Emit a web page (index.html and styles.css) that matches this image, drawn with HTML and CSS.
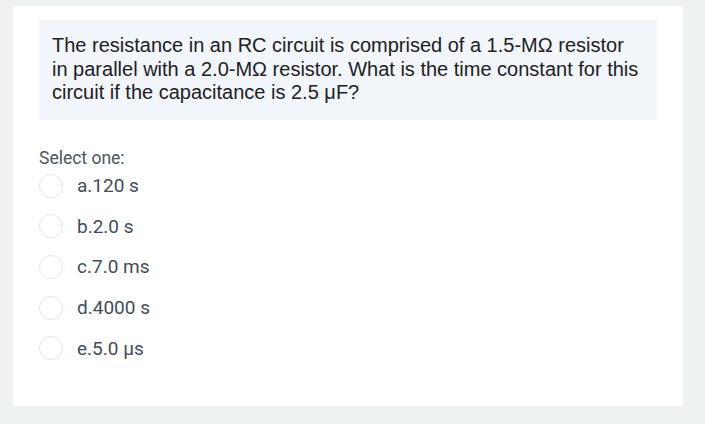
FILE: index.html
```html
<!DOCTYPE html>
<html>
<head>
<meta charset="utf-8">
<link rel="stylesheet" href="styles.css">
</head>
<body>
<div class="card">
  <div class="qtext">The resistance in an RC circuit is comprised of a 1.5-MΩ resistor in parallel with a 2.0-MΩ resistor. What is the time constant for this circuit if the capacitance is 2.5 μF?</div>
  <div class="answers">
    <div class="prompt">Select one:</div>
    <div class="opt"><span class="radio"></span><span class="label">a.120 s</span></div>
    <div class="opt"><span class="radio"></span><span class="label">b.2.0 s</span></div>
    <div class="opt"><span class="radio"></span><span class="label">c.7.0 ms</span></div>
    <div class="opt"><span class="radio"></span><span class="label">d.4000 s</span></div>
    <div class="opt"><span class="radio"></span><span class="label">e.5.0 μs</span></div>
  </div>
</div>
</body>
</html>
```
FILE: styles.css
```css
html, body { margin: 0; padding: 0; }
body {
  background: #eef1f2;
  width: 705px;
  height: 424px;
  overflow: hidden;
  padding-top: 6px;
  box-sizing: border-box;
}
.card {
  margin-left: 13px;
  width: 670px;
  height: 400px;
  background: #fff;
  padding: 14px 26px 0 26px;
  box-sizing: border-box;
}
.qtext {
  background: #f2f5f9;
  border-radius: 3px;
  padding: 14px 13px 15px 13px;
  font-family: "Liberation Sans", Arial, sans-serif;
  font-size: 20px;
  line-height: 23.5px;
  color: #1d2125;
}
.answers {
  padding-top: 28px;
  font-family: Roboto, sans-serif;
  color: #495460;
}
.prompt {
  font-size: 17.5px;
  line-height: 20px;
  color: #4c5661;
  margin-bottom: 6px;
}
.opt {
  display: flex;
  align-items: center;
  height: 24px;
  margin-bottom: 16.7px;
}
.radio {
  width: 22px;
  height: 22px;
  border: 1px solid #e2e7e8;
  border-radius: 50%;
  background: #fff;
  flex: none;
}
.label {
  margin-left: 14px;
  font-size: 19px;
  color: #434d58;
}
```
